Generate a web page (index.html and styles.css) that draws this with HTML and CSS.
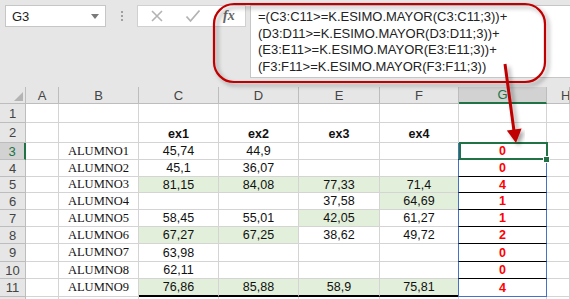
FILE: index.html
```html
<!DOCTYPE html>
<html lang="es">
<head>
    <meta charset="UTF-8">
    <title>K.ESIMO.MAYOR</title>
    <link rel="stylesheet" href="styles.css">
</head>
<body>
    <div class="app">
        <div class="toolbar">
            <div class="namebox">
                <span>G3</span>
                <svg class="caret" width="8" height="5" viewBox="0 0 8 5"><path d="M0 0h8L4 5z" fill="#7a7a7a"/></svg>
            </div>
            <div class="grip"><i></i><i></i><i></i></div>
            <div class="editbox">
                <svg class="btn" width="14" height="14" viewBox="0 0 14 14"><path d="M2 2l10 10M12 2L2 12" stroke="#b3b3b3" stroke-width="1.6" fill="none"/></svg>
                <svg class="btn" width="16" height="14" viewBox="0 0 16 14"><path d="M1.5 7.5l4 4.5L14.5 1.5" stroke="#b3b3b3" stroke-width="1.8" fill="none"/></svg>
                <span class="fx">fx</span>
            </div>
            <div class="formula">
                <div>=(C3:C11&gt;=K.ESIMO.MAYOR(C3:C11;3))+</div>
                <div>(D3:D11&gt;=K.ESIMO.MAYOR(D3:D11;3))+</div>
                <div>(E3:E11&gt;=K.ESIMO.MAYOR(E3:E11;3))+</div>
                <div>(F3:F11&gt;=K.ESIMO.MAYOR(F3:F11;3))</div>
            </div>
        </div>

        <div class="sheet">
            <div class="hd corner"><svg width="9" height="9" viewBox="0 0 9 9"><path d="M9 0v9H0z" fill="#b4b4b4"/></svg></div>
            <div class="hd">A</div><div class="hd">B</div><div class="hd">C</div><div class="hd">D</div>
            <div class="hd">E</div><div class="hd">F</div><div class="hd col-sel">G</div><div class="hd h">H</div>

            <div class="hd rh">1</div>
            <div class="c"></div><div class="c"></div><div class="c"></div><div class="c"></div>
            <div class="c"></div><div class="c"></div><div class="c"></div><div class="c"></div>

            <div class="hd rh">2</div>
            <div class="c"></div><div class="c"></div>
            <div class="c lbl">ex1</div><div class="c lbl">ex2</div><div class="c lbl">ex3</div><div class="c lbl">ex4</div>
            <div class="c"></div><div class="c"></div>

            <div class="hd rh row-sel">3</div>
            <div class="c"></div><div class="c name">ALUMNO1</div>
            <div class="c">45,74</div><div class="c">44,9</div><div class="c"></div><div class="c"></div>
            <div class="c res active">0</div><div class="c"></div>

            <div class="hd rh">4</div>
            <div class="c"></div><div class="c name">ALUMNO2</div>
            <div class="c">45,1</div><div class="c">36,07</div><div class="c"></div><div class="c"></div>
            <div class="c res">0</div><div class="c"></div>

            <div class="hd rh">5</div>
            <div class="c"></div><div class="c name">ALUMNO3</div>
            <div class="c hl">81,15</div><div class="c hl">84,08</div><div class="c hl">77,33</div><div class="c hl">71,4</div>
            <div class="c res">4</div><div class="c"></div>

            <div class="hd rh">6</div>
            <div class="c"></div><div class="c name">ALUMNO4</div>
            <div class="c"></div><div class="c"></div><div class="c">37,58</div><div class="c hl">64,69</div>
            <div class="c res">1</div><div class="c"></div>

            <div class="hd rh">7</div>
            <div class="c"></div><div class="c name">ALUMNO5</div>
            <div class="c">58,45</div><div class="c">55,01</div><div class="c hl">42,05</div><div class="c">61,27</div>
            <div class="c res">1</div><div class="c"></div>

            <div class="hd rh">8</div>
            <div class="c"></div><div class="c name">ALUMNO6</div>
            <div class="c hl">67,27</div><div class="c hl">67,25</div><div class="c">38,62</div><div class="c">49,72</div>
            <div class="c res">2</div><div class="c"></div>

            <div class="hd rh">9</div>
            <div class="c"></div><div class="c name">ALUMNO7</div>
            <div class="c">63,98</div><div class="c"></div><div class="c"></div><div class="c"></div>
            <div class="c res">0</div><div class="c"></div>

            <div class="hd rh">10</div>
            <div class="c"></div><div class="c name">ALUMNO8</div>
            <div class="c">62,11</div><div class="c"></div><div class="c"></div><div class="c"></div>
            <div class="c res">0</div><div class="c"></div>

            <div class="hd rh">11</div>
            <div class="c"></div><div class="c name">ALUMNO9</div>
            <div class="c hl last">76,86</div><div class="c hl last">85,88</div><div class="c hl last">58,9</div><div class="c hl last">75,81</div>
            <div class="c res end">4</div><div class="c"></div>

            <div class="hd rh"></div>
            <div class="c"></div><div class="c"></div><div class="c"></div><div class="c"></div>
            <div class="c"></div><div class="c"></div><div class="c"></div><div class="c"></div>
        </div>

        <!-- callout drawn over the formula bar and sheet -->
        <svg class="callout" width="570" height="299" viewBox="0 0 570 299">
            <defs>
                <filter id="sh" x="-10%" y="-10%" width="130%" height="140%">
                    <feDropShadow dx="3" dy="3" stdDeviation="2" flood-color="#000" flood-opacity="0.35"/>
                </filter>
            </defs>
            <rect x="214" y="4" width="331" height="78" rx="20" fill="none" stroke="#c00000" stroke-width="2.2" filter="url(#sh)"/>
            <g filter="url(#sh)">
                <line x1="505" y1="64" x2="514" y2="131" stroke="#c00000" stroke-width="3"/>
                <polygon points="506.8,130.5 521.6,128.5 516,143" fill="#c00000"/>
            </g>
        </svg>
    </div>
</body>
</html>
```

FILE: styles.css
```css
body {
    margin: 0;
    background-color: #e6e6e6;
    font-family: 'Liberation Sans', Arial, sans-serif;
}

.app {
    position: relative;
    width: 570px;
    height: 299px;
    overflow: hidden;
}

/* formula bar */
.toolbar {
    height: 87px;
    box-sizing: border-box;
    padding: 5px 0 0 5px;
    display: flex;
    align-items: flex-start;
}

.namebox {
    width: 101px;
    height: 22px;
    box-sizing: border-box;
    background-color: #fff;
    border: 1px solid #c6c6c6;
    display: flex;
    align-items: center;
    justify-content: space-between;
    padding: 0 6px 0 6px;
    font-size: 13px;
    color: #222;
}

.grip {
    width: 31px;
    height: 22px;
    display: flex;
    flex-direction: column;
    align-items: center;
    justify-content: center;
    gap: 2px;
}

.grip i {
    width: 2px;
    height: 2px;
    background-color: #a0a0a0;
}

.editbox {
    width: 109px;
    height: 22px;
    box-sizing: border-box;
    background-color: #fff;
    border: 1px solid #d0d0d0;
    display: flex;
    align-items: center;
    padding-left: 12px;
    gap: 21px;
}

.fx {
    font-family: 'Liberation Serif', serif;
    font-style: italic;
    font-weight: bold;
    font-size: 14px;
    color: #666;
    margin-left: 1px;
}

.formula {
    flex: 1;
    height: 73px;
    margin-left: 4px;
    box-sizing: border-box;
    background-color: #fff;
    border: 1px solid #c6c6c6;
    border-right: none;
    padding: 3px 0 0 7px;
    font-size: 13px;
    line-height: 16.5px;
    color: #222;
    white-space: nowrap;
}

/* sheet */
.sheet {
    display: grid;
    grid-template-columns: 26px 33px 80px 80px 80px 81px 79px 88px 1fr;
    grid-template-rows: 17px 19px 20px 17px 17px 16px 17px 17px 17px 18px 17px 18px 17px;
    background-color: #fff;
}

.sheet > div {
    box-sizing: border-box;
    border-right: 1px solid #d4d4d4;
    border-bottom: 1px solid #d4d4d4;
    display: flex;
    align-items: center;
    justify-content: center;
    white-space: nowrap;
    overflow: hidden;
}

.hd {
    background-color: #e6e6e6;
    border-color: #bdbdbd !important;
    color: #444;
    font-size: 13px;
}

.corner {
    align-items: flex-end !important;
    justify-content: flex-end !important;
    padding: 0 2px 2px 0;
}

.h {
    justify-content: flex-start !important;
    padding-left: 14px;
}

.col-sel {
    background-color: #d2d2d2;
    color: #217346;
    border-bottom: 2px solid #217346 !important;
}

.row-sel {
    background-color: #d2d2d2;
    color: #217346;
    border-right: 2px solid #217346 !important;
}

.c {
    font-size: 12.5px;
    color: #111;
}

.name {
    font-family: 'Liberation Serif', serif;
}

.lbl {
    font-weight: bold;
    align-items: flex-end !important;
    padding-bottom: 1px;
}

.hl {
    background-color: #e2efda;
}

.last {
    border-bottom: 2px solid #000 !important;
}

.res {
    margin-left: -1px;
    border-left: 1px solid #4472c4;
    border-right: 1px solid #4472c4 !important;
    border-bottom: 1px solid #000 !important;
    color: #ff0000;
    font-weight: bold;
}

.res.end {
    border-bottom: 1px solid #4472c4 !important;
}

.active {
    position: relative;
    z-index: 2;
    overflow: visible !important;
}

.active::after {
    content: '';
    position: absolute;
    top: -1px;
    left: 0;
    right: -2px;
    bottom: -1px;
    border: 2px solid #217346;
}

.active::before {
    content: '';
    position: absolute;
    right: -4px;
    bottom: -4px;
    width: 5px;
    height: 5px;
    background-color: #217346;
    border: 1px solid #fff;
    z-index: 1;
}

.callout {
    position: absolute;
    top: 0;
    left: 0;
    pointer-events: none;
    z-index: 5;
}
```
